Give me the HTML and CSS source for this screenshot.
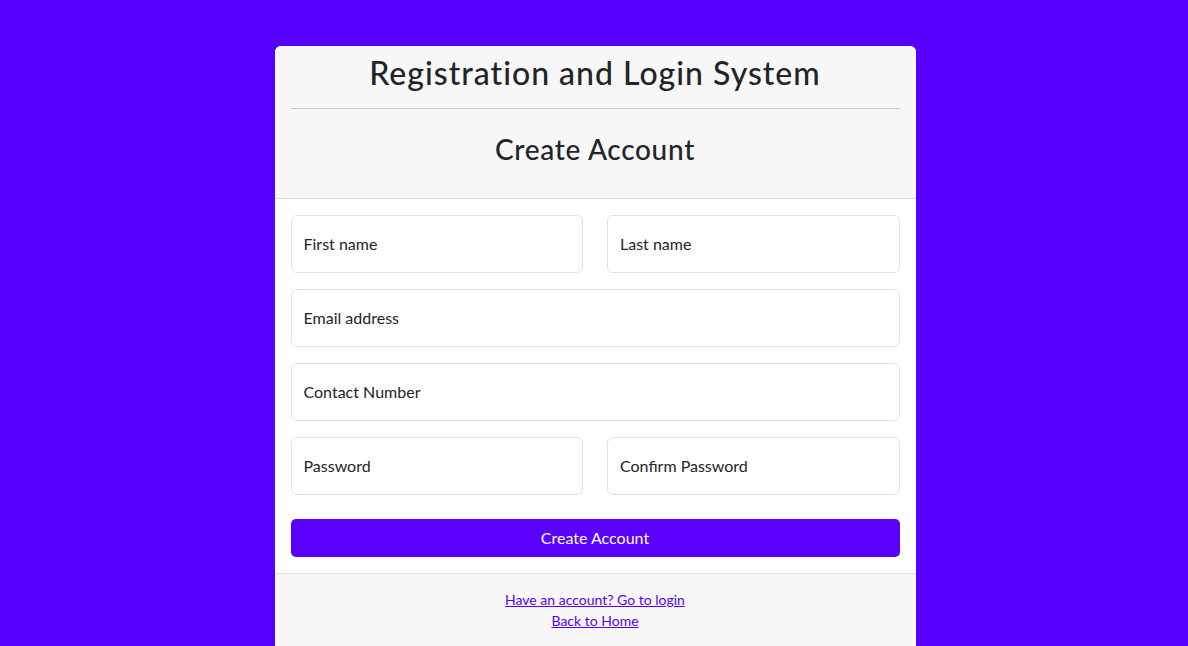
FILE: index.html
```html
<!DOCTYPE html>
<html lang="en">
<head>
<meta charset="utf-8">
<title>Registration and Login System</title>
<link rel="stylesheet" href="styles.css">
</head>
<body>
<main class="page">
  <section class="card">
    <header class="card-header">
      <h2 class="title">Registration and Login System</h2>
      <hr class="divider">
      <h3 class="subtitle">Create Account</h3>
    </header>
    <form class="card-body">
      <div class="row two">
        <label class="field"><span>First name</span></label>
        <label class="field"><span>Last name</span></label>
      </div>
      <div class="row">
        <label class="field"><span>Email address</span></label>
      </div>
      <div class="row">
        <label class="field"><span>Contact Number</span></label>
      </div>
      <div class="row two">
        <label class="field"><span>Password</span></label>
        <label class="field"><span>Confirm Password</span></label>
      </div>
      <button type="button" class="btn">Create Account</button>
    </form>
    <footer class="card-footer">
      <div class="links">
        <a href="#" class="link">Have an account? Go to login</a>
        <a href="#" class="link">Back to Home</a>
      </div>
    </footer>
  </section>
</main>
</body>
</html>
```

FILE: styles.css
```css
* { box-sizing: border-box; }
html, body {
  margin: 0;
  height: 100%;
}
body {
  background: #5700ff;
  font-family: "Lato", "Noto Sans", sans-serif;
  color: #212529;
  font-size: 16px;
  line-height: 1.5;
  overflow: hidden;
}
.page {
  display: flex;
  justify-content: center;
  padding: 46px 0 0 2px;
}
.card {
  width: 641px;
  background: #fff;
  border-radius: 6px;
  overflow: hidden;
  display: flex;
  flex-direction: column;
}
.card-header {
  background: #f7f7f7;
  border-bottom: 1px solid #dcdcdc;
  padding: 8px 16px;
  text-align: center;
}
.title {
  margin: 0;
  font-size: 32px;
  font-weight: 500;
  line-height: 1.2;
  letter-spacing: 1px;
}
.divider {
  margin: 16px 0;
  border: 0;
  border-top: 1px solid #c8c8c8;
}
.subtitle {
  margin: 0;
  padding: 8px 0 23px;
  font-size: 28px;
  font-weight: 500;
  line-height: 1.2;
  letter-spacing: 0.7px;
}
.card-body {
  padding: 16px;
  display: flex;
  flex-direction: column;
  gap: 16px;
  margin: 0;
}
.row {
  display: grid;
  grid-template-columns: 1fr;
  gap: 24px;
}
.row.two {
  grid-template-columns: 1fr 1fr;
}
.field {
  display: flex;
  align-items: center;
  height: 58px;
  border: 1px solid #dee2e6;
  border-radius: 6px;
  padding: 0 12px;
  background: #fff;
  color: #212529;
}
.btn {
  margin-top: 8px;
  height: 38px;
  border: 0;
  border-radius: 5px;
  background: #5a00ff;
  color: #fff;
  font-family: inherit;
  font-size: 16px;
  line-height: 1.5;
  cursor: pointer;
}
.card-footer {
  background: #f7f7f7;
  border-top: 1px solid #dcdcdc;
  padding: 15px 16px 24px;
  text-align: center;
}
.links {
  display: flex;
  flex-direction: column;
  align-items: center;
  font-size: 14px;
  line-height: 1.5;
}
.link {
  color: #5500ff;
  text-decoration: underline;
}
```
